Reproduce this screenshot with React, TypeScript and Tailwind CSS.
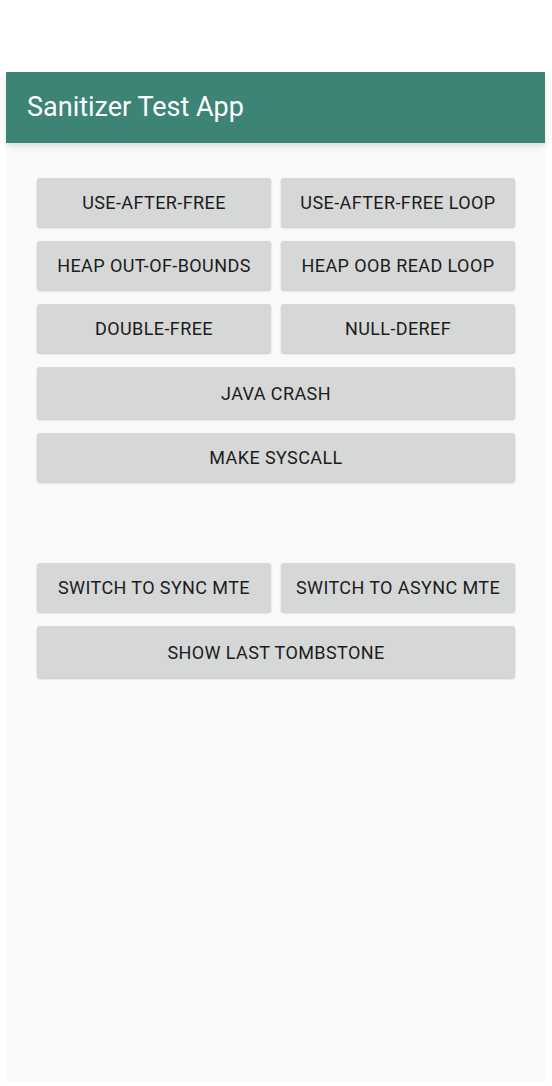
const font = { fontFamily: 'Roboto, "Noto Sans", sans-serif' };

function Btn({ label, tall }: { label: string; tall?: boolean }) {
  return (
    <button
      className={`flex items-center justify-center rounded-[3px] bg-[#d6d7d7] text-[18px] font-normal tracking-[0.4px] text-[#1c1c1c] shadow-[0_1px_2px_rgba(0,0,0,0.22)] ${
        tall ? 'h-[52px]' : 'h-[49px]'
      }`}
    >
      {label}
    </button>
  );
}

export default function App() {
  return (
    <div className="min-h-[1086px] bg-white" style={font}>
      <div className="ml-[6px] mr-[7px] pt-[72px]">
        <header className="relative z-10 flex h-[71px] items-center bg-[#3b8476] pl-[21px] shadow-[0_3px_6px_rgba(0,0,0,0.12)]">
          <h1 className="text-[27px] font-normal text-white">Sanitizer Test App</h1>
        </header>
        <main className="h-[939px] bg-[#fafafa] pl-[31px] pr-[30px] pt-[35px]">
          <div className="grid grid-cols-2 gap-x-[10px] gap-y-[14px]">
            <Btn label="USE-AFTER-FREE" />
            <Btn label="USE-AFTER-FREE LOOP" />
            <Btn label="HEAP OUT-OF-BOUNDS" />
            <Btn label="HEAP OOB READ LOOP" />
            <Btn label="DOUBLE-FREE" />
            <Btn label="NULL-DEREF" />
            <div className="col-span-2 grid">
              <Btn label="JAVA CRASH" tall />
            </div>
            <div className="col-span-2 grid">
              <Btn label="MAKE SYSCALL" />
            </div>
          </div>
          <div className="mt-[81px] grid grid-cols-2 gap-x-[10px] gap-y-[14px]">
            <Btn label="SWITCH TO SYNC MTE" />
            <Btn label="SWITCH TO ASYNC MTE" />
            <div className="col-span-2 grid">
              <Btn label="SHOW LAST TOMBSTONE" tall />
            </div>
          </div>
        </main>
      </div>
    </div>
  );
}
